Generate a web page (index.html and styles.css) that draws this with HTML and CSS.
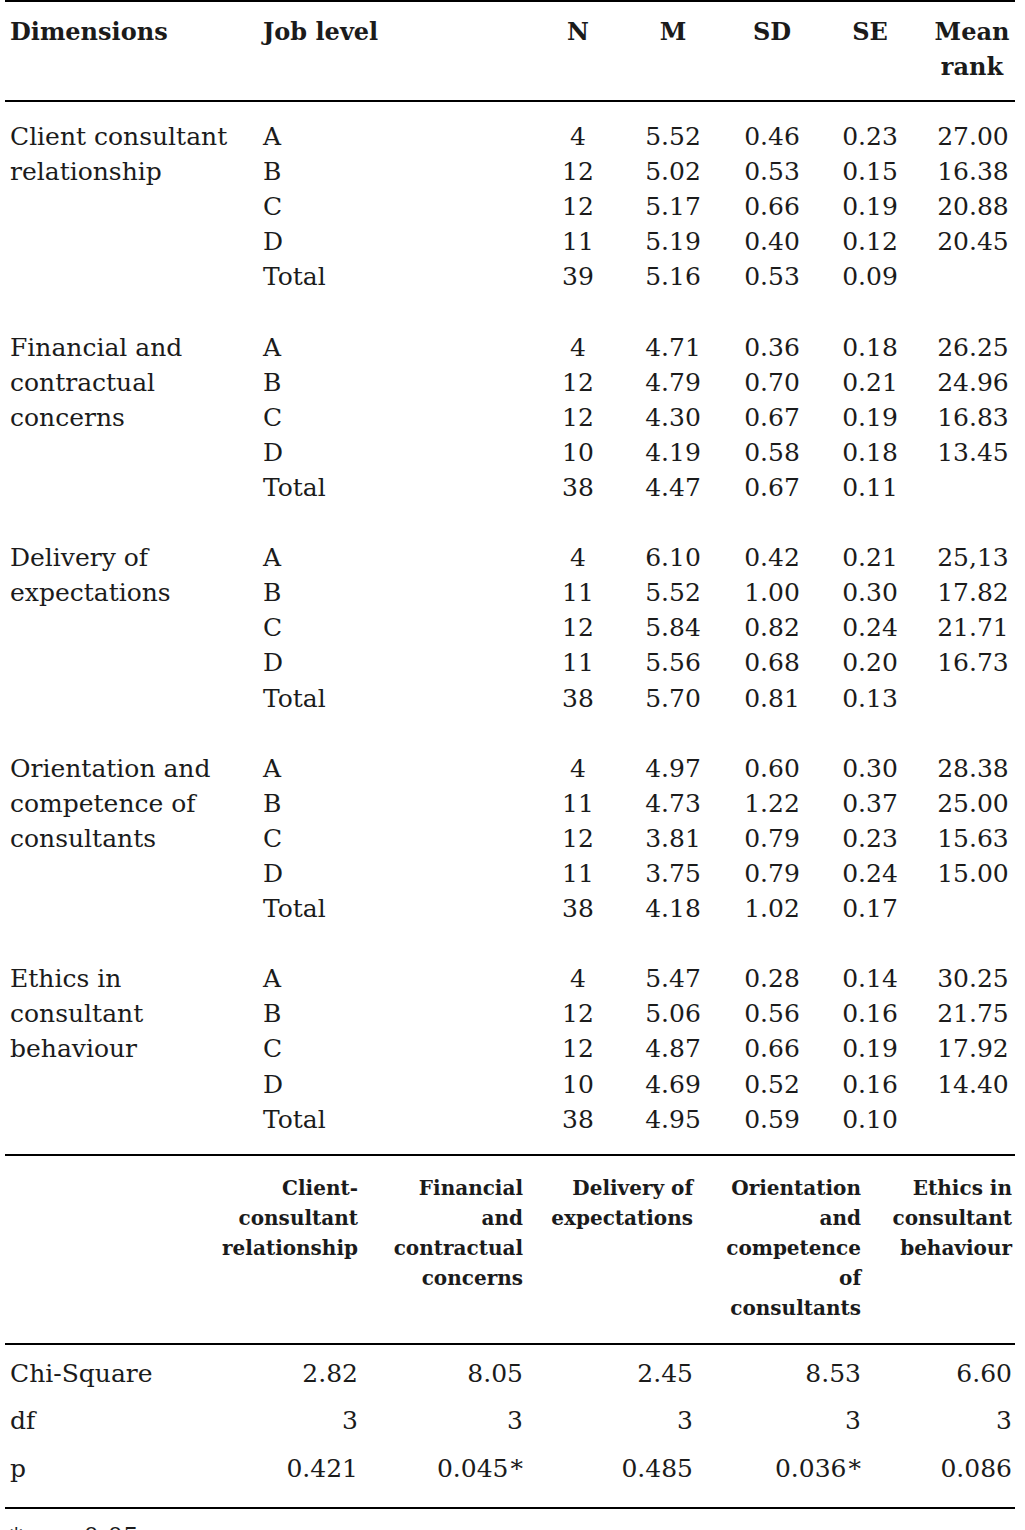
FILE: index.html
```html
<!DOCTYPE html>
<html lang="en">
<head>
<meta charset="utf-8">
<title>Job level table</title>
<link rel="stylesheet" href="styles.css">
</head>
<body>
<table class="desc">
  <colgroup>
    <col class="c-dim"><col class="c-lvl"><col class="c-n"><col class="c-m"><col class="c-sd"><col class="c-se"><col class="c-mr">
  </colgroup>
  <thead>
    <tr>
      <th class="left">Dimensions</th>
      <th class="left lvl">Job level</th>
      <th>N</th>
      <th>M</th>
      <th>SD</th>
      <th>SE</th>
      <th class="mr">Mean<br>rank</th>
    </tr>
  </thead>
  <tbody>
    <tr class="first"><td class="dim" rowspan="5">Client consultant relationship</td><td class="lvl">A</td><td>4</td><td>5.52</td><td>0.46</td><td>0.23</td><td class="mr">27.00</td></tr>
    <tr><td class="lvl">B</td><td>12</td><td>5.02</td><td>0.53</td><td>0.15</td><td class="mr">16.38</td></tr>
    <tr><td class="lvl">C</td><td>12</td><td>5.17</td><td>0.66</td><td>0.19</td><td class="mr">20.88</td></tr>
    <tr><td class="lvl">D</td><td>11</td><td>5.19</td><td>0.40</td><td>0.12</td><td class="mr">20.45</td></tr>
    <tr><td class="lvl">Total</td><td>39</td><td>5.16</td><td>0.53</td><td>0.09</td><td class="mr"></td></tr>
    <tr class="gap"><td colspan="7"></td></tr>
    <tr><td class="dim" rowspan="5">Financial and contractual concerns</td><td class="lvl">A</td><td>4</td><td>4.71</td><td>0.36</td><td>0.18</td><td class="mr">26.25</td></tr>
    <tr><td class="lvl">B</td><td>12</td><td>4.79</td><td>0.70</td><td>0.21</td><td class="mr">24.96</td></tr>
    <tr><td class="lvl">C</td><td>12</td><td>4.30</td><td>0.67</td><td>0.19</td><td class="mr">16.83</td></tr>
    <tr><td class="lvl">D</td><td>10</td><td>4.19</td><td>0.58</td><td>0.18</td><td class="mr">13.45</td></tr>
    <tr><td class="lvl">Total</td><td>38</td><td>4.47</td><td>0.67</td><td>0.11</td><td class="mr"></td></tr>
    <tr class="gap"><td colspan="7"></td></tr>
    <tr><td class="dim" rowspan="5">Delivery of expectations</td><td class="lvl">A</td><td>4</td><td>6.10</td><td>0.42</td><td>0.21</td><td class="mr">25,13</td></tr>
    <tr><td class="lvl">B</td><td>11</td><td>5.52</td><td>1.00</td><td>0.30</td><td class="mr">17.82</td></tr>
    <tr><td class="lvl">C</td><td>12</td><td>5.84</td><td>0.82</td><td>0.24</td><td class="mr">21.71</td></tr>
    <tr><td class="lvl">D</td><td>11</td><td>5.56</td><td>0.68</td><td>0.20</td><td class="mr">16.73</td></tr>
    <tr><td class="lvl">Total</td><td>38</td><td>5.70</td><td>0.81</td><td>0.13</td><td class="mr"></td></tr>
    <tr class="gap"><td colspan="7"></td></tr>
    <tr><td class="dim" rowspan="5">Orientation and competence of consultants</td><td class="lvl">A</td><td>4</td><td>4.97</td><td>0.60</td><td>0.30</td><td class="mr">28.38</td></tr>
    <tr><td class="lvl">B</td><td>11</td><td>4.73</td><td>1.22</td><td>0.37</td><td class="mr">25.00</td></tr>
    <tr><td class="lvl">C</td><td>12</td><td>3.81</td><td>0.79</td><td>0.23</td><td class="mr">15.63</td></tr>
    <tr><td class="lvl">D</td><td>11</td><td>3.75</td><td>0.79</td><td>0.24</td><td class="mr">15.00</td></tr>
    <tr><td class="lvl">Total</td><td>38</td><td>4.18</td><td>1.02</td><td>0.17</td><td class="mr"></td></tr>
    <tr class="gap"><td colspan="7"></td></tr>
    <tr><td class="dim" rowspan="5">Ethics in consultant behaviour</td><td class="lvl">A</td><td>4</td><td>5.47</td><td>0.28</td><td>0.14</td><td class="mr">30.25</td></tr>
    <tr><td class="lvl">B</td><td>12</td><td>5.06</td><td>0.56</td><td>0.16</td><td class="mr">21.75</td></tr>
    <tr><td class="lvl">C</td><td>12</td><td>4.87</td><td>0.66</td><td>0.19</td><td class="mr">17.92</td></tr>
    <tr><td class="lvl">D</td><td>10</td><td>4.69</td><td>0.52</td><td>0.16</td><td class="mr">14.40</td></tr>
    <tr class="last"><td class="lvl">Total</td><td>38</td><td>4.95</td><td>0.59</td><td>0.10</td><td class="mr"></td></tr>
  </tbody>
</table>

<table class="tests">
  <colgroup>
    <col class="t1"><col class="t2"><col class="t3"><col class="t4"><col class="t5"><col class="t6">
  </colgroup>
  <thead>
    <tr>
      <th></th>
      <th>Client-<br>consultant<br>relationship</th>
      <th>Financial<br>and<br>contractual<br>concerns</th>
      <th>Delivery of<br>expectations</th>
      <th>Orientation<br>and<br>competence<br>of<br>consultants</th>
      <th>Ethics in<br>consultant<br>behaviour</th>
    </tr>
  </thead>
  <tbody>
    <tr class="first"><td class="label">Chi-Square</td><td>2.82</td><td>8.05</td><td>2.45</td><td>8.53</td><td>6.60</td></tr>
    <tr><td class="label">df</td><td>3</td><td>3</td><td>3</td><td>3</td><td>3</td></tr>
    <tr class="last"><td class="label">p</td><td>0.421</td><td>0.045<span class="star">*</span></td><td>0.485</td><td>0.036<span class="star">*</span></td><td>0.086</td></tr>
  </tbody>
</table>
<p class="note">* p &lt; 0.05</p>
</body>
</html>
```
FILE: styles.css
```css
html, body {
  margin: 0;
  padding: 0;
  background: #ffffff;
}
body {
  font-family: "DejaVu Serif", "Liberation Serif", serif;
  color: #1b1b1b;
  font-size: 25px;
}
table {
  border-collapse: collapse;
  margin-left: 5px;
  width: 1010px;
  table-layout: fixed;
}
td, th {
  padding: 0;
}

/* descriptive table */
.desc {
  border-top: 2px solid #000;
  border-bottom: 2px solid #000;
}
.c-dim { width: 248px; }
.c-lvl { width: 282px; }
.c-n { width: 86px; }
.c-m { width: 104px; }
.c-sd { width: 94px; }
.c-se { width: 102px; }
.c-mr { width: 94px; }

.desc thead th {
  font-weight: bold;
  font-size: 24px;
  line-height: 35px;
  vertical-align: top;
  text-align: center;
  padding-top: 12px;
  padding-bottom: 16px;
  border-bottom: 2px solid #000;
  white-space: nowrap;
}
.desc th.left { text-align: left; padding-left: 5px; }
.desc th.lvl { padding-left: 10px; }
.desc th.mr { padding-left: 8px; }

.desc td {
  line-height: 35.1px;
  height: 35.1px;
  text-align: center;
  vertical-align: top;
  white-space: nowrap;
}
.desc td.dim {
  text-align: left;
  padding-left: 5px;
  white-space: normal;
}
.desc td.lvl { text-align: left; padding-left: 10px; }
.desc td.mr { padding-left: 10px; }
.desc tr.first td { padding-top: 17px; }
.desc tr.last td { padding-bottom: 17px; }
.desc tr.gap td { height: 35.1px; }

/* tests table */
.tests {
  border-bottom: 2px solid #000;
}
.t1 { width: 195px; }
.t2 { width: 161px; }
.t3 { width: 165px; }
.t4 { width: 170px; }
.t5 { width: 168px; }
.t6 { width: 151px; }

.tests thead th {
  font-weight: bold;
  font-size: 20px;
  line-height: 30px;
  text-align: right;
  vertical-align: top;
  padding: 17px 3px 20px 0;
  border-bottom: 2px solid #000;
  white-space: nowrap;
}
.tests td {
  line-height: 47.5px;
  text-align: right;
  padding-right: 3px;
  white-space: nowrap;
}
.tests td.label { text-align: left; padding-left: 5px; padding-right: 0; }
.tests tr.first td { padding-top: 5px; }
.tests tr.last td { padding-bottom: 15px; }
.star { margin-left: 2px; }

.note {
  margin: 0;
  padding: 10px 0 0 10px;
  line-height: 35px;
}
```
